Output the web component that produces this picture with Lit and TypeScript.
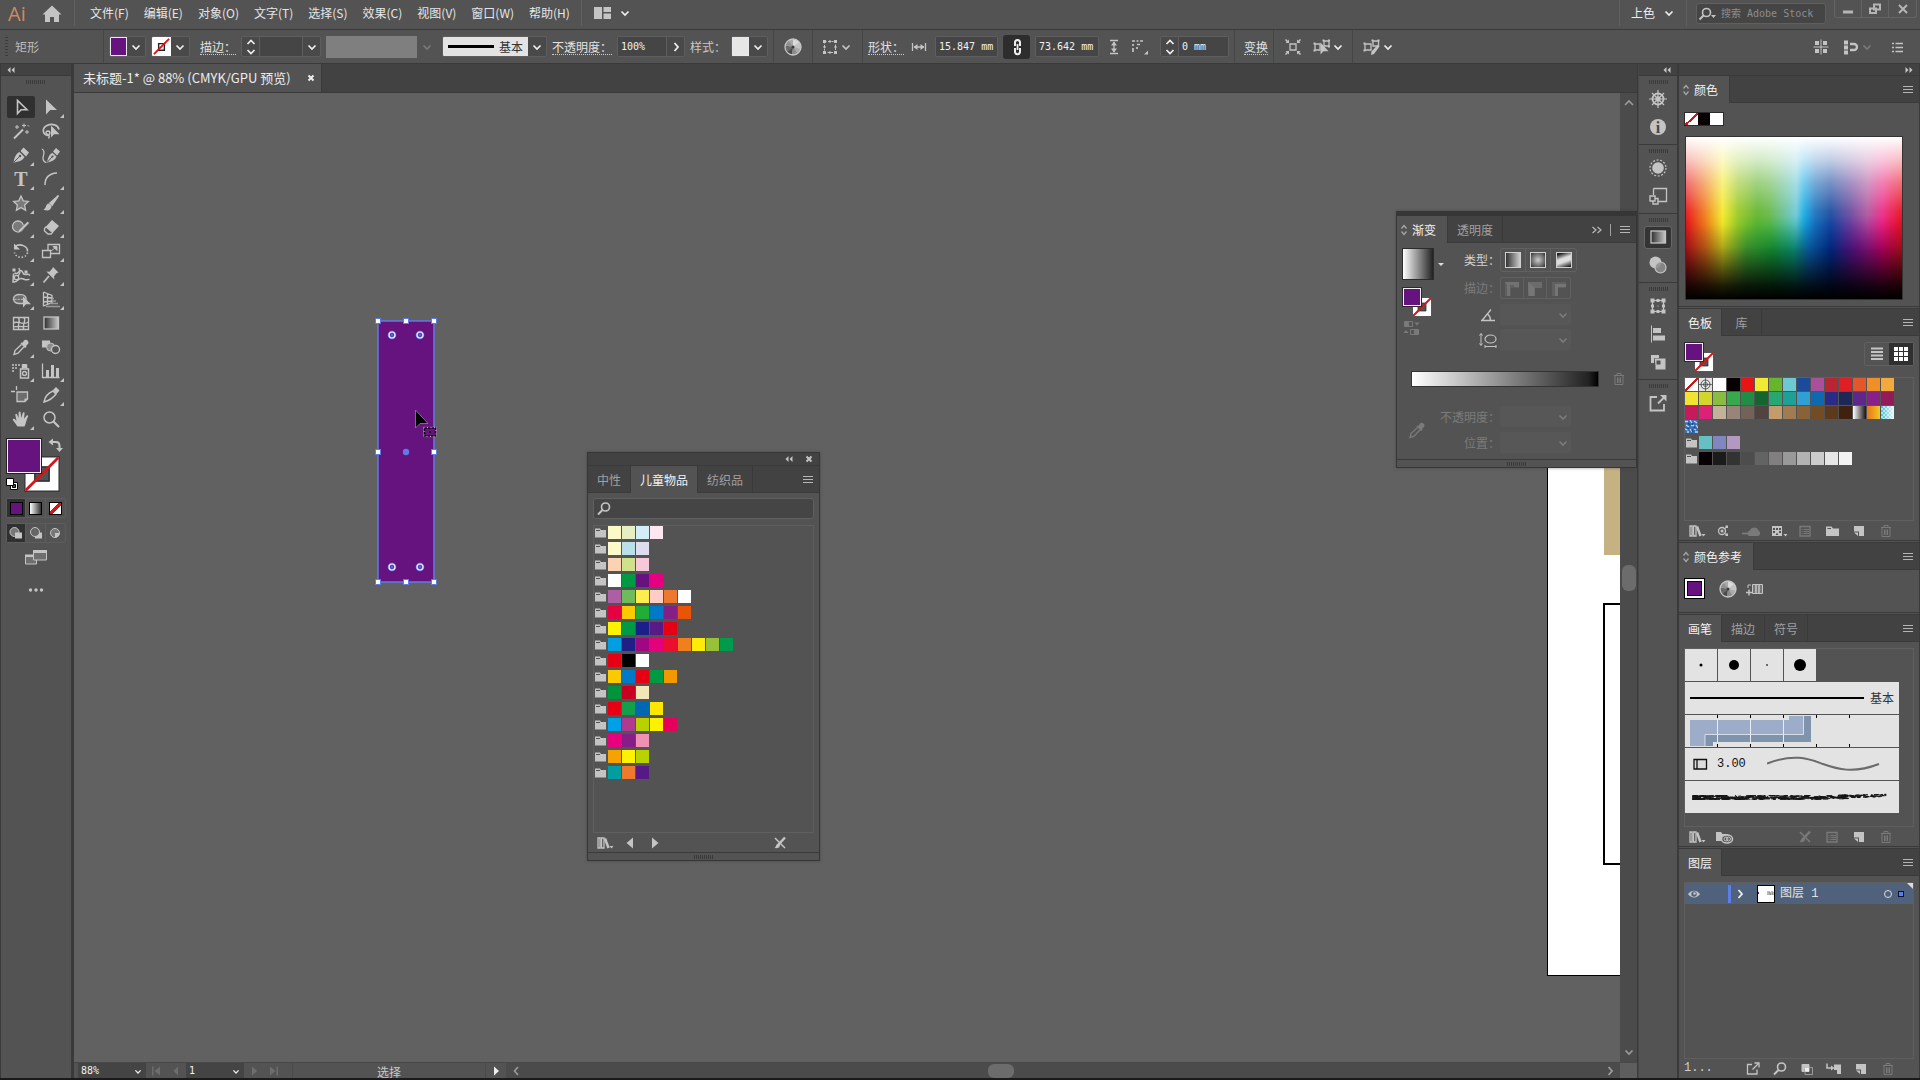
import { LitElement, html, svg, css, nothing } from "lit";
import { customElement, state } from "lit/decorators.js";
import { classMap } from "lit/directives/class-map.js";

const PURPLE = "#67137f";

/* Icons are drawn on a 20 x 20 grid unless a size is passed. */
const glyphs: Record<string, any> = {
  select: svg`<path d="M6.500 3.500v13l3.600-3.800h5.900z" fill="none" stroke="currentColor" stroke-width="1.600"/>`,
  direct: svg`<path d="M5 2.500v15l4.200-4.500H16z" fill="currentColor"/>`,
  wand: svg`<path d="M3 17.500 12 8.500" stroke="currentColor" stroke-width="2"/><path d="M6 4v4M4 6h4M13 2.500v4M11 4.500h4M16 9v4M14 11h4" stroke="currentColor"/><path d="m16.500 4 1.500 1.500" stroke="currentColor"/>`,
  lasso: svg`<path d="M7 14.500c-5-.5-7-7-1-10 5-2.500 11-.5 12 4" fill="none" stroke="currentColor" stroke-width="1.600"/><path d="M7 14.500c2-1 3-4 0-4.500-2.500 0-3 3 0 3.500 1 .5 2 2 .5 4" fill="none" stroke="currentColor" stroke-width="1.400"/><path d="M10 4.500v12l3-3.300h5.500z" fill="currentColor"/>`,
  pen: svg`<path d="M2.500 17.500c1-5 2-8.500 6-10.500l5 5c-2 4-6 4.500-11 5.500z" fill="currentColor"/><path d="m9.500 6 3-3.500 5.500 5-3 4z" fill="currentColor"/><path d="m3 17 5.500-5.500" stroke="#535353"/><circle cx="9" cy="11" r="1.200" fill="#535353"/>`,
  curvature: svg`<path d="M6 17.500c1-5 2-8 5.500-9.800l4 4c-2 4-5 4.800-9.500 5.800z" fill="currentColor"/><path d="m12 6.500 3-3.500 4 3.500-3 4z" fill="currentColor"/><path d="m6.500 17 4.500-5" stroke="#535353"/><circle cx="11.500" cy="11.500" r="1.100" fill="#535353"/><path d="M1 4c4 2 1 7 1 9s1 4 3.500 4.500" fill="none" stroke="currentColor" stroke-width="1.300"/>`,
  type: svg`<text x="10" y="16.500" text-anchor="middle" font-family="Liberation Serif, serif" font-weight="700" font-size="20" fill="currentColor">T</text>`,
  arc: svg`<path d="M4 16C4 9 8 4.500 16 4" fill="none" stroke="currentColor" stroke-width="1.500"/>`,
  star: svg`<path d="m10 3 2.200 4.800 5.200.6-3.800 3.600 1 5.200L10 14.600l-4.600 2.600 1-5.200-3.800-3.600 5.200-.6z" fill="#7a7a7a" stroke="currentColor" stroke-width="1.300"/>`,
  brush: svg`<path d="M17.500 2.500 9 10l2 2.200z" fill="currentColor" stroke="currentColor" stroke-width="1.500"/><path d="M8 10.500c-4 .5-2 4.500-5.500 6 3.500 1.800 8 1 8-3.500z" fill="currentColor"/>`,
  shaper: svg`<circle cx="7" cy="9.500" r="5.500" fill="#7a7a7a" stroke="currentColor" stroke-width="1.300"/><path d="m18.500 6-9 9-3 1.500 1-3.500 9-8.500z" fill="currentColor" stroke="#535353" stroke-width=".5"/>`,
  eraser: svg`<path d="m11 3 7 6-6 6.500-7-6z" fill="currentColor"/><path d="m5 9.800 6.500 5.700-1.500 1.500H7L3.500 14v-2.500z" fill="none" stroke="currentColor" stroke-width="1.300"/>`,
  rotate: svg`<path d="M4 5.500c5-3.500 13-.5 12.500 5" fill="none" stroke="currentColor" stroke-width="1.600"/><path d="M3 2.500v6h6z" fill="currentColor"/><path d="M16.500 11.500c-1 6-11 7-13 0" fill="none" stroke="currentColor" stroke-width="1.600" stroke-dasharray="1.500 1.800"/>`,
  scale: svg`<path d="M7 3.500h11.500v9H7z" fill="none" stroke="currentColor" stroke-width="1.300"/><path d="M1.500 9.500h8v7h-8z" fill="#535353" stroke="currentColor" stroke-width="1.300"/><path d="m10 10 4-3M12 5.500h4v4z" fill="currentColor" stroke="currentColor"/>`,
  width: svg`<path d="M2.500 8.500 2 17c5 .5 5-4 8.500-3.500 3 .5 5 2.500 8 .5M3.500 8c4 2.500 4-3 6.500-2.500S11 9.500 14 9.500s3-1 5 1" fill="none" stroke="currentColor" stroke-width="1.500"/><path d="m8 3 1 4.500-2 4" fill="none" stroke="currentColor" stroke-width="1.300"/><path d="M1.500 3.500h3v3h-3z" fill="currentColor"/><circle cx="5.500" cy="12.500" r="2.200" fill="#535353" stroke="currentColor" stroke-width="1.300"/><path d="M13.500 5.500h3v3h-3z" fill="currentColor"/>`,
  pin: svg`<path d="m12 2 5.500 5.500-2 .8-2.500 3 .3 3.200-8-8 3.200.3 2.700-3z" fill="currentColor"/><path d="m8 11-5.500 6.500" stroke="currentColor" stroke-width="1.800"/>`,
  shapebuild: svg`<path d="M12 14.500H7.500a5.500 4.500 0 1 1 2-8.800 4.800 4.800 0 0 1 5.500 6.300" fill="#6d6d6d" stroke="currentColor" stroke-width="1.300"/><path d="M3.500 10.300h9" stroke="currentColor" stroke-dasharray="2 1.200"/><path d="M12 7.500v11l3-3.300h5z" fill="currentColor"/>`,
  perspective: svg`<path d="M2.500 3v14.500M2.500 3l8.500 3.500v7L2.500 17M2.500 8 11 9M2.500 13l8.500-1M6.500 4.500V15" fill="none" stroke="currentColor" stroke-width="1.300"/><path d="M11 9.500h2M11 12h4M9 14.500h8M5 17.500h14" stroke="#9a9a9a" stroke-width="1.500"/>`,
  mesh: svg`<path d="M2.500 4.500h15v12h-15z M2.500 10c4-3 9 3 15-1M7 4.500c4 4-2 7 1 12M13 4.500c3 4-3 8 0 12M2.500 14c5-2 9 1 15-1" fill="none" stroke="currentColor" stroke-width="1.300"/>`,
  gradient: svg`<defs><linearGradient id="g-tool"><stop offset="0" stop-color="#2d2d2d"/><stop offset="1" stop-color="#c9c9c9"/></linearGradient></defs><rect x="3" y="4" width="14.500" height="12" fill="url(#g-tool)" stroke="currentColor" stroke-width="1.300"/>`,
  dropper: svg`<path d="M13 3.500c2-2.500 6 1 4 3.500l-2 2 .5 1-1.500 1L9.500 6.500l1-1 1 .3z" fill="currentColor"/><path d="m10.500 7.500-6.500 6L3 17.500l4-1.300 6-6.400" fill="none" stroke="currentColor" stroke-width="1.400"/>`,
  blend: svg`<path d="M1 3.500h8v7H1z" fill="currentColor"/><circle cx="9.500" cy="10" r="4" fill="#8c8c8c" stroke="#c4c4c4"/><circle cx="14.500" cy="12.500" r="4" fill="#535353" stroke="currentColor" stroke-width="1.400"/>`,
  spray: svg`<path d="M9.500 8h8v9h-8z M11.500 8V4h4v4" fill="none" stroke="currentColor" stroke-width="1.500"/><path d="M11.500 3h4v4h-4z" fill="currentColor"/><circle cx="13.500" cy="12.500" r="2" fill="none" stroke="currentColor" stroke-width="1.300"/><path d="M1 4h2M4 4h2M7 4h2M1 7h2M4 7h2M1 10h2" stroke="currentColor" stroke-width="1.600"/>`,
  chart: svg`<path d="M1.500 2.500v14h17" fill="none" stroke="currentColor" stroke-width="1.300"/><path d="M5 9h3v7H5zM10 4h3v12h-3zM15 7h3v9h-3z" fill="currentColor"/>`,
  artboard: svg`<path d="M5.500 1v4M0 6.500h4" stroke="currentColor" stroke-width="1.300"/><path d="M6 7h10.500v7l-2.500 2.500H6z" fill="#6d6d6d" stroke="currentColor" stroke-width="1.300"/><path d="M16.500 13.500 13.500 17v-3.500z" fill="currentColor"/>`,
  slice: svg`<path d="M3 17c1-5 4-9 9-11l3 3c-3 4-6 6.500-12 8z" fill="none" stroke="currentColor" stroke-width="1.500"/><path d="m12 5 3-3 3.500 3.500-3 3.500z" fill="currentColor"/>`,
  hand: svg`<path d="M6.500 17.500c-1.500-2-3-4.500-4.500-6.300-.8-1.200.8-2 1.800-1.100L5.500 12 4.300 5.800c0-1.200 1.400-1.400 1.800-.3L7.500 9 7.700 3.300c.1-1.100 1.700-1.100 1.900 0L10.200 9l1.600-5.200c.4-1 1.900-.7 1.800.4L13 9.800 15.600 6.500c.8-.8 2 0 1.500 1-1.500 3-2 6.500-3.600 10z" fill="currentColor"/>`,
  zoom: svg`<circle cx="8.500" cy="8.500" r="5.500" fill="none" stroke="currentColor" stroke-width="1.500"/><path d="m12.500 12.500 5.500 5.500" stroke="currentColor" stroke-width="2.200"/>`,
  screens: svg`<path d="M1.500 8h11v8h-11z" fill="#6f6f6f" stroke="currentColor"/><path d="M1 6.500h12V9H1z" fill="currentColor"/><path d="M9.500 3h13v9h-13z" fill="#6f6f6f" stroke="currentColor"/><path d="M9 2h14v3H9z" fill="currentColor"/>`,
  home: svg`<path d="M10 1.500 0.500 10.500H3V18h5v-5h4v5h5v-7.500h2.500z" fill="currentColor"/>`,
  layout: svg`<path d="M1 4h8v12H1zM10.500 4H18v5h-7.500zM10.500 10.500H18V16h-7.500z" fill="currentColor"/>`,
  chev: svg`<path d="m6.500 8.500 3.500 3.500 3.500-3.500" fill="none" stroke="currentColor" stroke-width="1.700"/>`,
  chevUp: svg`<path d="m6 12 4-4 4 4" fill="none" stroke="currentColor" stroke-width="1.600"/>`,
  chevR: svg`<path d="m8.500 6 3.500 4-3.500 4" fill="none" stroke="currentColor" stroke-width="1.800"/>`,
  chevL: svg`<path d="m12 6-3.500 4 3.500 4" fill="none" stroke="currentColor" stroke-width="1.600"/>`,
  spin: svg`<path d="m6.500 7 3.500-3.500L13.500 7M6.500 13l3.500 3.500 3.500-3.500" fill="none" stroke="currentColor" stroke-width="1.700"/>`,
  fold: svg`<path d="m7.500 8.500 2.500-3 2.500 3M7.500 11.500l2.500 3 2.500-3" fill="none" stroke="currentColor" stroke-width="1.200"/>`,
  dblL: svg`<path d="m9.500 7-3 3 3 3zM13.500 7l-3 3 3 3z" fill="currentColor"/>`,
  dblR: svg`<path d="m6.500 7 3 3-3 3zM10.500 7l3 3-3 3z" fill="currentColor"/>`,
  dblRopen: svg`<path d="m5.500 7 3.500 3-3.500 3M10.500 7l3.500 3-3.500 3" fill="none" stroke="currentColor" stroke-width="1.300"/>`,
  close: svg`<path d="m7.500 7.500 5 5M12.500 7.500l-5 5" stroke="currentColor" stroke-width="2"/>`,
  closeBig: svg`<path d="m6 6 8 8M14 6l-8 8" stroke="currentColor" stroke-width="2"/>`,
  min: svg`<path d="M5 11.500h10v3H5z" fill="currentColor"/>`,
  restore: svg`<path d="M9 5.500h6v5H9zM5 9.500h6v4.500H5z" fill="#535353" stroke="currentColor" stroke-width="2"/>`,
  burger: svg`<path d="M5 6.500h10M5 9.500h10M5 12.500h10" stroke="currentColor"/>`,
  search: svg`<circle cx="11.500" cy="8" r="4" fill="none" stroke="currentColor" stroke-width="1.600"/><path d="M8.500 11 4 15.500" stroke="currentColor" stroke-width="2"/>`,
  searchMenu: svg`<circle cx="9.500" cy="8.500" r="4" fill="none" stroke="currentColor" stroke-width="1.600"/><path d="M6.500 11.500 2.500 15.500" stroke="currentColor" stroke-width="2"/><path d="M14 11h5l-2.500 3z" fill="currentColor"/>`,
  wheel: svg`<circle cx="10" cy="10" r="8" fill="#a9a9a9"/><path d="M10 10 10 2A8 8 0 0 1 16.500 5.200z" fill="#dadada"/><path d="M10 10 16.500 5.200A8 8 0 0 1 17.700 12z" fill="#c3c3c3"/><path d="M10 10 4 15.300A8 8 0 0 1 2.200 8.500z" fill="#6a6a6a"/><path d="M10 10 9 18A8 8 0 0 1 4 15.300z" fill="#4a4a4a"/><path d="M10 10 14.500 16.600A8 8 0 0 1 9 18z" fill="#8b8b8b"/><path d="M10 10 2.500 8A8 8 0 0 1 5.500 3.500z" fill="#8f8f8f"/><circle cx="10" cy="10" r="8" fill="none" stroke="#c6c6c6" stroke-width="1.300"/><circle cx="10" cy="10" r="1.500" fill="#3b3b3b"/>`,
  transform: svg`<path d="M4.500 4.500h11v11h-11z" fill="none" stroke="currentColor" stroke-dasharray="2 1.500"/><path d="M3 3h3v3H3zM14 3h3v3h-3zM3 14h3v3H3zM14 14h3v3h-3zM9 3.500h2v2H9zM9 14.500h2v2H9zM3.500 9h2v2h-2zM14.500 9h2v2h-2z" fill="currentColor"/>`,
  hsize: svg`<path d="M3.500 6v8M16.500 6v8M5 10h10" stroke="currentColor" stroke-width="1.300"/><path d="m8.500 7-4 3 4 3zM11.500 7l4 3-4 3z" fill="currentColor"/>`,
  vsize: svg`<path d="M6 3.500h8M6 16.500h8M10 5v10" stroke="currentColor" stroke-width="1.300"/><path d="m7 8.500 3-4 3 4zM7 11.500l3 4 3-4z" fill="currentColor"/>`,
  link: svg`<path d="M8 9V5.500C8 2 13 2 13 5.500V9M8 11v3.500C8 18 13 18 13 14.500V11" fill="none" stroke="currentColor" stroke-width="2"/><path d="M10.500 7v6" stroke="currentColor" stroke-width="1.800"/>`,
  corner: svg`<path d="M3 4h3M7.500 4h2M11 4h3M4 7v2M4 11v4M8 7.500h3M8 10v2" stroke="currentColor" stroke-width="1.700"/><path d="M19 13.500v4h-4z" fill="currentColor"/>`,
  isolate: svg`<path d="M7 7h6v6H7z" fill="none" stroke="currentColor" stroke-width="1.300"/><path d="m2.500 2.500 3 3M17.500 2.500l-3 3M2.500 17.500l3-3M17.500 17.500l-3-3" stroke="currentColor" stroke-width="1.500"/><path d="M6 2.500V6H2.500zM14 2.500V6h3.500zM6 17.500V14H2.500zM14 17.500V14h3.500z" fill="currentColor"/>`,
  similar: svg`<path d="M3 7h5v6H3zM12 4h5v5h-5z" fill="none" stroke="currentColor" stroke-width="1.300"/><path d="M1.500 5.500h2v2h-2zM1.500 12.500h2v2h-2zM10.500 2.500h2v2h-2zM16 2.500h2v2h-2zM16 8.500h2v2h-2z" fill="currentColor"/><path d="M8.500 5.500v12l3-3.300h5z" fill="currentColor"/>`,
  editSimilar: svg`<path d="M3 7h6v6H3zM11 4h5.500v5H11z" fill="none" stroke="currentColor" stroke-width="1.300"/><path d="M1.500 5.500h2v2h-2zM1.500 12.500h2v2h-2zM9.500 2.500h2v2h-2zM15.500 2.500h2v2h-2z" fill="currentColor"/><path d="m15.500 8 2 1.500-5.500 7.500-3 1 .5-3.500z" fill="currentColor"/>`,
  alignGrid: svg`<path d="M4 4h4v4H4zM12 4h4v4h-4zM4 12h4v4H4zM12 12h4v4h-4z" fill="currentColor"/><path d="M10 2.500v15M2.500 10h15" stroke="currentColor"/>`,
  snap: svg`<path d="M3 3.500h4v4H3zM3 8.500h4v4H3zM3 13.500h4v4H3z" fill="currentColor"/><path d="M9 7h4a3 3 0 0 1 0 6H9" fill="none" stroke="currentColor" stroke-width="2.300"/>`,
  list: svg`<path d="M5 6.500h2M5 10.500h2M5 14.500h2M8.500 6.500H16M8.500 10.500H16M8.500 14.500H16" stroke="currentColor" stroke-width="1.500"/>`,
  helm: svg`<circle cx="10" cy="10" r="5.500" fill="none" stroke="currentColor" stroke-width="1.800"/><circle cx="10" cy="10" r="2" fill="none" stroke="currentColor" stroke-width="1.300"/><path d="M10 1v18M1 10h18M4 4l12 12M16 4 4 16" stroke="currentColor" stroke-width="1.200"/>`,
  info: svg`<circle cx="10" cy="10" r="8" fill="currentColor"/><text x="10" y="15.500" text-anchor="middle" font-family="Liberation Serif, serif" font-weight="700" font-size="16" fill="#484848">i</text>`,
  appearance: svg`<circle cx="10" cy="10" r="5.800" fill="currentColor"/><circle cx="10" cy="10" r="8" fill="none" stroke="currentColor" stroke-width="1.200" stroke-dasharray="2 1.600"/>`,
  styles: svg`<path d="M5.500 2.500h13v13h-9" fill="none" stroke="currentColor" stroke-width="1.300"/><path d="M5.500 2.500V9" stroke="currentColor" stroke-width="1.300"/><path d="M2 10h5v5H2zM7 12.500h3V18H5v-3" fill="none" stroke="currentColor" stroke-width="1.400"/>`,
  transparency: svg`<circle cx="7.500" cy="7.500" r="6" fill="currentColor"/><circle cx="12.500" cy="12.500" r="5.500" fill="#8e8e8e" fill-opacity=".85" stroke="currentColor" stroke-width="1.200"/>`,
  align: svg`<path d="M3.500 1.500v17" stroke="currentColor"/><path d="M5 4h8v5H5zM5 11.500h12v5H5z" fill="currentColor"/>`,
  pathfinder: svg`<path d="M3 3h8v3H6v5H3zM6.500 6.500h11v11h-10v-6z" fill="currentColor"/><path d="M8 8h5v5H8z" fill="#535353" stroke="currentColor"/>`,
  exportIcon: svg`<path d="M9 4H2.500v13.500H16V11" fill="none" stroke="currentColor" stroke-width="1.800"/><path d="M12 2h6.500v6.500z" fill="currentColor"/><path d="m10 10.500 6-6" stroke="currentColor" stroke-width="1.800"/>`,
  collect: svg`<path d="M9 5.500H4.500v9.500H14v-4.500" fill="none" stroke="currentColor" stroke-width="1.300"/><path d="M11.500 4H16v4.500" fill="none" stroke="currentColor" stroke-width="1.300"/><path d="m9.500 10.500 6-6" stroke="currentColor" stroke-width="1.300"/>`,
  tframe: svg`<path d="M4.500 4.500h11v11h-11z" fill="none" stroke="currentColor" stroke-width="1.200"/><path d="M2.500 2.500h4v4h-4zM13.500 2.500h4v4h-4zM2.500 13.500h4v4h-4zM13.500 13.500h4v4h-4zM8.500 3h3v3h-3zM8.500 14h3v3h-3zM3 8.500h3v3H3zM14 8.500h3v3h-3zM9.500 9.500h1v1h-1z" fill="currentColor"/>`,
  books: svg`<path d="M3 5h2v10H3zM6.500 5H9v10H6.500z" fill="none" stroke="currentColor" stroke-width="1.300"/><path d="m10 5.500 3.500 9.500" stroke="currentColor" stroke-width="2.500"/><path d="M14.500 13h4l-2 2.500z" fill="currentColor"/>`,
  kinds: svg`<circle cx="8" cy="10" r="3.500" fill="none" stroke="currentColor" stroke-width="1.300"/><circle cx="8" cy="10" r="1.500" fill="currentColor"/><path d="m10 8.500 3-3M10 11.500l3 3" stroke="currentColor"/><path d="M11.500 4.500h2.500v2.500h-2.500zM11.500 12.500h2.500v2.500h-2.500z" fill="currentColor"/>`,
  cloud: svg`<path d="M8 15a3 3 0 0 1 1-5.500 4.500 4.500 0 0 1 8.500 0 3 3 0 0 1-.5 5.500z" fill="currentColor"/><path d="M1 12.500h7" stroke="currentColor" stroke-width="1.800"/>`,
  swatchKinds: svg`<path d="M4 5h10v10H4z" fill="currentColor"/><path d="M5 7h2v2H5zM8 7h2v2H8zM11 7h2v2h-2zM5 10h2v2H5zM8 12.500h2V14H8zM11 10h2v2h-2z" fill="#535353"/><path d="M15.500 13h4l-2 2.500z" fill="currentColor"/>`,
  options: svg`<path d="M5 5.500h10v9.500H5z" fill="none" stroke="currentColor" stroke-width="1.300"/><path d="M6.500 8.500h1M6.500 10.500h1M6.500 12.500h1M8.500 8.500H14M8.500 10.500H14M8.500 12.500H14" stroke="currentColor"/>`,
  folder: svg`<path d="M4 5.500h5.500l1.500 2h6V15H4z" fill="currentColor"/><path d="M5.500 7.500h3.500" stroke="#535353"/>`,
  fresh: svg`<path d="M5 5h10v10h-5v-4.500H5z" fill="currentColor"/><path d="M5 11.500h4V15z" fill="currentColor"/>`,
  trash: svg`<path d="M5 6.500h10M8 6V4.500h4V6M6 7v8.500h8V7M8.500 8.500v5.500M10 8.500v5.500M11.500 8.500v5.500" fill="none" stroke="currentColor"/>`,
  ccFolder: svg`<path d="M2 5h5l1.500 2H14v7H2z" fill="currentColor"/><ellipse cx="13" cy="12" rx="5.500" ry="4" fill="#535353" stroke="currentColor" stroke-width="1.500"/><circle cx="12" cy="12" r="2" fill="none" stroke="currentColor"/><circle cx="14.500" cy="12" r="2" fill="none" stroke="currentColor"/>`,
  noBrush: svg`<path d="m5 5 10 10" stroke="currentColor" stroke-width="1.500"/><path d="m15 4.500-6.500 7" stroke="currentColor" stroke-width="2.500"/><path d="M8.500 10.500c-2.500 0-2 3-4 4.500 2.500.5 5.500 0 5.500-3z" fill="currentColor"/>`,
  clip: svg`<path d="M5 5.500h7v7H5z" fill="currentColor" stroke="currentColor"/><path d="M8 8.500h7.500v7H8z" fill="none" stroke="#9a9a9a"/><path d="M8 8.500h4v4H8z" fill="#eee"/>`,
  sublayer: svg`<path d="M3 4.500V9h5" fill="none" stroke="currentColor" stroke-width="1.500"/><path d="m7 6.500 3.500 2.500L7 11.500z" fill="currentColor"/><path d="M10 5.500h7V15h-4v-4h-3z" fill="currentColor"/>`,
  prev: svg`<path d="M13 4.500v11L6.500 10z" fill="currentColor"/>`,
  next: svg`<path d="M7 4.500v11l6.500-5.500z" fill="currentColor"/>`,
  first: svg`<path d="M14 5.500v9L8.500 10zM6 5.500h1.500v9H6z" fill="currentColor"/>`,
  last: svg`<path d="M6 5.500v9l5.500-4.500zM12.500 5.500H14v9h-1.500z" fill="currentColor"/>`,
  prevS: svg`<path d="M12 5.500v9L7.500 10z" fill="currentColor"/>`,
  nextS: svg`<path d="M8 5.500v9l5-4.500z" fill="currentColor"/>`,
  angle: svg`<path d="M3 15.500h14M4 15.500 13 4.500M9.500 9a8 8 0 0 1 3 6.500" fill="none" stroke="currentColor" stroke-width="1.300"/>`,
  aspect: svg`<ellipse cx="12.500" cy="9" rx="5.500" ry="4" fill="none" stroke="currentColor" stroke-width="1.200"/><path d="M3 4v11M1.500 5.500 3 3.500l1.500 2M1.500 13.500 3 15.500l1.500-2M7 15v3M18 15v3M7 16.500h11" fill="none" stroke="currentColor"/>`,
  reverse: svg`<path d="M2.500 4.500h8v5h-8zM8.500 12.500h8v5h-8z" fill="none" stroke="currentColor"/><path d="M3 5h4v4H3zM12 13h4v4h-4zM12.500 5.500h5l-2.500 3zM1.500 16h5L4 13z" fill="currentColor"/>`,
  addGroup: svg`<path d="M8.500 5.500h10v9h-10z" fill="#777" stroke="currentColor"/><path d="M12 5.500v9M15 5.500v9M2 13.500h6M5 10.500v6" stroke="currentColor" stroke-width="1.500"/><path d="M4 9V6h3" fill="none" stroke="currentColor"/>`,
  rows: svg`<path d="M4 4.500h12M4 8h12M4 11.500h12M4 15h12" stroke="currentColor" stroke-width="1.800"/>`,
  tiles: svg`<path d="M3 3h4v4H3zM8 3h4v4H8zM13 3h4v4h-4zM3 8h4v4H3zM8 8h4v4H8zM13 8h4v4h-4zM3 13h4v4H3zM8 13h4v4H8zM13 13h4v4h-4z" fill="currentColor"/>`,
  eye: svg`<path d="M4 10c3-4.500 9-4.500 12 0-3 4.500-9 4.500-12 0z" fill="currentColor"/><circle cx="10" cy="10" r="2.700" fill="#50627b"/><circle cx="10.500" cy="9.500" r="1.300" fill="currentColor"/>`,
  swap: svg`<path d="M6 6h4c2 0 3.500 1.500 3.500 4v3" fill="none" stroke="currentColor" stroke-width="2"/><path d="M7 2.500v7L2.500 6zM10 12h7l-3.500 4z" fill="currentColor"/>`,
  defaults: svg`<path d="M8.500 8.500h7v7h-7z" fill="#fff" stroke="#000"/><path d="M10.500 10.500h3v3h-3z" fill="#535353" stroke="#000"/><path d="M4.500 4.500h7v7h-7z" fill="#fff" stroke="#000"/>`,
  drawNormal: svg`<circle cx="8.500" cy="9" r="4.500" fill="#777" stroke="currentColor"/><path d="M9 9.500h7v6H9z" fill="currentColor"/>`,
  drawBehind: svg`<path d="M9 9.500h7v6H9z" fill="currentColor"/><circle cx="9" cy="9" r="4.500" fill="#666" stroke="currentColor"/>`,
  drawInside: svg`<circle cx="10" cy="10" r="4.500" fill="#777" stroke="currentColor"/><path d="M10 10h4.500c0 3-2 4.500-4.500 4.500z" fill="currentColor"/>`,
  more: svg`<circle cx="4.500" cy="10" r="1.700" fill="currentColor"/><circle cx="10" cy="10" r="1.700" fill="currentColor"/><circle cx="15.500" cy="10" r="1.700" fill="currentColor"/>`,
  strokeIn: svg`<path d="M3 4h14v6h-8v8H3z" fill="#5f5f5f"/><path d="M3 4h14v5h-5v-2H8v11H5V7z" fill="currentColor" opacity=".7"/>`,
  strokeAlong: svg`<path d="M3 4h14v6H9v8H3z" fill="#6b6b6b"/><path d="m3 4 7 6v8H4z" fill="currentColor" opacity=".7"/>`,
  strokeAcross: svg`<path d="M3 4h14v6H9v8H3z" fill="#606060"/><path d="M6 6h11v3H9v9H6z" fill="currentColor" opacity=".8"/>`,
};

const icon = (name: string, w = 20, h = 20, size = 1) => html`<svg
  class="icon" viewBox="0 0 ${w} ${h}" width=${Math.round(w * size)} height=${Math.round(h * size)} aria-hidden="true"
>${glyphs[name]}</svg>`;

const tools: [string, string, boolean][] = [
  ["select", "选择工具", false], ["direct", "直接选择工具", true],
  ["wand", "魔棒工具", false], ["lasso", "套索工具", false],
  ["pen", "钢笔工具", true], ["curvature", "曲率工具", false],
  ["type", "文字工具", true], ["arc", "弧形工具", true],
  ["star", "星形工具", true], ["brush", "画笔工具", true],
  ["shaper", "Shaper 工具", true], ["eraser", "橡皮擦工具", true],
  ["rotate", "旋转工具", true], ["scale", "比例缩放工具", true],
  ["width", "宽度工具", true], ["pin", "操控变形工具", true],
  ["shapebuild", "形状生成器工具", true], ["perspective", "透视网格工具", true],
  ["mesh", "网格工具", false], ["gradient", "渐变工具", false],
  ["dropper", "吸管工具", true], ["blend", "混合工具", false],
  ["spray", "符号喷枪工具", true], ["chart", "柱形图工具", true],
  ["artboard", "画板工具", false], ["slice", "切片工具", true],
  ["hand", "抓手工具", true], ["zoom", "缩放工具", false],
];

const menus = ["文件(F)", "编辑(E)", "对象(O)", "文字(T)", "选择(S)", "效果(C)", "视图(V)", "窗口(W)", "帮助(H)"];

const kidsGroups: string[][] = [
  ["#fdf8c8", "#e6eec3", "#d3edf9", "#fce6f0"],
  ["#fef9c9", "#b9dfe9", "#dfdcef"],
  ["#fbd3b3", "#cfe18b", "#f7c8da"],
  ["#ffffff", "#009a44", "#66127f", "#e5007f"],
  ["#ad5fa3", "#6dbb5a", "#fdee50", "#fbcdc6", "#ef7830", "#ffffff"],
  ["#e40041", "#fbca00", "#22ac38", "#0079c9", "#851f85", "#e95504"],
  ["#fff200", "#009a44", "#1b1f88", "#581b86", "#e60013"],
  ["#019fdf", "#1f2085", "#9f0783", "#e4007b", "#ea0f2f", "#ef801b", "#fdec0a", "#98c038", "#009a4d"],
  ["#e60013", "#000000", "#ffffff"],
  ["#fbca00", "#007ac8", "#e60013", "#009a44", "#f39900"],
  ["#00953d", "#c70022", "#f2e5b6"],
  ["#e60013", "#13a04a", "#0067b3", "#ffe600"],
  ["#00a0e9", "#b03a90", "#b8d200", "#fff200", "#e5005a"],
  ["#e9007f", "#871d86", "#ee91b2"],
  ["#f6a200", "#fff200", "#b8d200"],
  ["#009ea0", "#ef7a2c", "#561a86"],
];

const mainSwatches = [
  "none", "registration", "#ffffff", "#070102", "#e71516", "#f0ea34", "#67b42d", "#6cc8d2", "#1b4b9c", "#aa509b", "#b92532", "#df1e26", "#e3582a", "#ee8f28", "#f2a93d",
  "#f0e431", "#d2d52b", "#88bd40", "#36a94d", "#1f8d46", "#12652f", "#27a873", "#1da196", "#2f9fd4", "#0d6ab1", "#282c88", "#1d2856", "#5e278c", "#891f88", "#951a58",
  "#c61a5d", "#de2078", "#c3b299", "#998578", "#736258", "#514440", "#c49b6b", "#a17c52", "#8a6237", "#744c24", "#5e3a1d", "#3f210f",
  "linear-gradient(90deg,#fff,#1a1014)", "linear-gradient(90deg,#e5771e,#f09c1b 50%,#e2cf2a)",
  "conic-gradient(#fff8 25%,#0000 0 50%,#fff8 0 75%,#0000 0) 0 0/4px 4px,linear-gradient(90deg,#45bcd0,#e8f4f6)",
  "pattern",
];
const swatchGroups = [
  ["#66bfc3", "#8086bf", "#b398c2"],
  ["#070004", "#1b1b1c", "#333333", "#4d4d4d", "#626363", "#827f80", "#999999", "#b3b3b3", "#cccccc", "#e6e6e6", "#f3f3f3"],
];

/* Grain of the charcoal brush: short dark dabs that thin out to the right. */
const charcoal = (() => {
  let seed = 7;
  const rnd = () => (seed = (seed * 16807) % 2147483647) / 2147483647;
  let d = "";
  for (let i = 0; i < 460; i++) {
    const x = 7 + Math.pow(rnd(), 1.3) * 194;
    const thin = x > 160 ? 0.6 : 0.9;
    const y = 16.5 - Math.max(0, (x - 130) / 35) + (rnd() - 0.5) * 4.5 * thin;
    const l = (x > 160 ? 2 : 6) * rnd() + 1;
    d += `M${x.toFixed(1)} ${y.toFixed(1)}h${l.toFixed(1)}`;
  }
  return d;
})();

@customElement("app-root")
export class AppRoot extends LitElement {
  @state() private tool = "select";

  static styles = css`
    :host {
      display: flex; flex-direction: column; height: 100vh; box-sizing: border-box;
      border-bottom: 2px solid #1b191a; background: #535353; color: #dcdcdc; overflow: hidden;
      font: 12px/16px "Noto Sans CJK SC", "Noto Sans", sans-serif;
      --line: #3a3a3a; --dark: #424242; --field: #454545; --edge: #606060; --ico: #c4c4c4;
      --mono: "DejaVu Sans Mono", "Noto Sans CJK SC", monospace;
    }
    * { box-sizing: border-box; }
    button, input, select {
      font: inherit; color: inherit; background: none; border: 0; margin: 0; padding: 0;
      appearance: none; border-radius: 0; outline: 0; min-width: 0;
    }
    button { display: flex; align-items: center; justify-content: center; }
    .icon { display: block; flex: none; color: var(--ico); }
    .bright .icon { color: #eee; }
    .dim .icon, .icon.dim { color: #7a7a7a; }
    .grow { flex: 1; }
    .vsep { width: 1px; align-self: stretch; background: #454545; }
    .mono, .mono input, .mono select { font-family: var(--mono); font-size: 10px; color: #f2f2f2; }

    /* menu bar */
    .menubar { display: flex; height: 30px; flex: none; border-bottom: 1px solid var(--line); }
    .logo { width: 34px; flex: none; padding-left: 8px; font: 20px/28px "Open Sans", sans-serif; color: #cf8a62; }
    .home { width: 36px; height: 28px; }
    .menus { display: flex; gap: 15px; height: 26px; align-items: center; padding: 0 11px 0 15px; margin-left: 4px; border-left: 1px solid #606060; }
    .menus button { height: 20px; white-space: nowrap; color: #e6e6e6; }
    .layout { display: flex; height: 26px; align-items: center; gap: 2px; padding-left: 11px; border-left: 1px solid #606060; }
    .paint { display: flex; height: 26px; align-items: center; gap: 4px; padding: 0 7px 0 11px; border-left: 1px solid #606060; border-right: 1px solid #606060; color: #eee; }
    .stock { display: flex; align-items: center; width: 130px; height: 21px; margin: 3px 8px 0 9px; background: var(--field); border: 1px solid #5f5f5f; border-radius: 3px; }
    .stock input { flex: 1; padding-left: 4px; font: 10px/14px var(--mono); }
    .stock input::placeholder { color: #8d8d8d; opacity: 1; }
    .win { display: flex; height: 18px; margin-right: 3px; border: 1px solid #646464; border-top: 0; border-radius: 0 0 3px 3px; }
    .win button { width: 27px; border-right: 1px solid #646464; }
    .win button:last-child { border: 0; }
    .win .icon { color: #b5b5b5; }
    .layout button:first-child .icon { color: #c4c4c4; }

    /* control bar */
    .control {
      display: grid; flex: none; height: 34px; padding: 0 13px 0 5px; column-gap: 5px; align-items: center;
      border-bottom: 1px solid var(--line);
      grid-template-columns: 3px 85px 1px 37px 39px 41px 80px 111px 105px 60px 68px 36px 37px 1px 28px 1px 39px 1px 36px 21px 63px 27px 64px 20px 26px 69px 1px 28px 1px 28px 35px 1px 44px 1fr auto;
    }
    .grip-v { height: 20px; background: repeating-linear-gradient(#3c3c3c 0 1px, transparent 1px 3px); }
    .kind { padding-left: 2px; color: #bdbdbd; }
    .ul { justify-self: end; white-space: nowrap; line-height: 15px; border-bottom: 1px dotted #ccc; color: #e2e2e2; }
    .plain { white-space: nowrap; color: #c8c8c8; }
    .box { display: flex; height: 21px; background: #494949; border: 1px solid #5e5e5e; border-radius: 2px; overflow: hidden; }
    .box input { flex: 1; width: 0; padding: 0 3px; background: var(--field); }
    .box button { width: 18px; flex: none; overflow: hidden; }
    .box .spinner { border-right: 1px solid #5e5e5e; }
    .box .drop { border-left: 1px solid #5e5e5e; }
    .chip { flex: 1; align-self: stretch; border: 1px solid #ece6ee; background: #67137f; }
    .chip.light { background: #e6e6e6; }
    .grey { display: flex; height: 22px; }
    .grey span { flex: 1; background: #7f7f7f; }
    .basic { display: flex; align-items: center; flex: 1; gap: 5px; padding: 0 5px; background: #e3e3e3; color: #333; }
    .basic i { flex: 1; height: 3px; background: #000; }
    .pair { display: flex; align-items: center; overflow: hidden; }
    .pair .icon + .icon { margin-left: -4px; }
    .pair .icon:first-child { color: #c4c4c4; }
    .linked { height: 24px; background: #2d2d2d; border-radius: 3px; overflow: hidden; }
    .right-tools { display: flex; align-items: center; gap: 10px; }
    .right-tools .icon + .icon { color: #7a7a7a; }

    /* body */
    .main { display: flex; flex: 1; min-height: 0; }
    .strip { display: flex; align-items: center; height: 12px; flex: none; background: var(--dark); border-bottom: 1px solid var(--line); overflow: hidden; }
    .strip button { height: 12px; overflow: hidden; }
    .grip { width: 19px; height: 4px; background: repeating-linear-gradient(90deg, #3a3a3a 0 1px, transparent 1px 2px); }

    .toolbar { display: flex; flex-direction: column; width: 74px; flex: none; border-left: 1px solid var(--line); border-right: 3px solid var(--line); }
    .toolbar .grip { margin: 4px auto 0 25px; }
    .toolgrid { display: grid; flex: none; grid-template-columns: 28px 28px; column-gap: 2px; grid-auto-rows: 24px; margin: 11px 0 0 6px; }
    .toolgrid button { position: relative; border-radius: 2px; }
    .toolgrid button.on { background: #303030; height: 22px; align-self: center; }
    .toolgrid button.sub::after { content: ""; position: absolute; right: 1px; bottom: 1px; border: 2px solid; border-color: transparent #c4c4c4 #c4c4c4 transparent; }
    .proxy { position: relative; flex: none; height: 54px; margin: 7px 0 6px 5px; }
    .proxy > * { position: absolute; }
    .fill { left: 0; top: 0; width: 36px; height: 36px; background: #67137f; border: 1px solid #222; outline: 1px solid #eee; outline-offset: -2px; }
    .stroke { left: 18px; top: 18px; }
    .swap { left: 40px; top: -2px; }
    .defs { left: -4px; top: 36px; }
    .modes { display: grid; flex: none; grid-template-columns: repeat(3, 1fr); width: 60px; height: 20px; margin: 0 0 5px 5px; border: 1px solid #5d5d5d; border-radius: 2px; }
    .modes button { overflow: hidden; border-right: 1px solid #5d5d5d; }
    .modes button:last-child { border: 0; }
    .modes .on { background: #303030; }
    .modes i { width: 13px; height: 13px; border: 1px solid #000; }
    .m-fill { background: #67137f; }
    .m-grad { background: linear-gradient(90deg, #fff, #333); }
    .m-none { background: linear-gradient(135deg, #fff 40%, #d8141a 40% 60%, #fff 60%); }
    .screen { margin: 0 0 0 21px; width: 28px; }
    .more { margin: 14px 0 0 25px; width: 20px; }

    .workspace { position: relative; display: flex; flex-direction: column; flex: 1; min-width: 0; border-right: 1px solid var(--line); }
    .doctabs { display: flex; height: 29px; flex: none; background: var(--dark); border-bottom: 1px solid var(--line); }
    .doctab { display: flex; align-items: center; gap: 10px; padding: 0 0 0 9px; background: #535353; color: #ececec; border-right: 1px solid var(--line); font-size: 13px; }
    .stage { display: flex; flex: 1; min-height: 0; }
    .canvas { position: relative; flex: 1; background: #616161; overflow: hidden; }
    .vscroll { display: flex; flex-direction: column; align-items: center; justify-content: space-between; width: 17px; background: #4b4b4b; }
    .vscroll i { width: 14px; height: 26px; border-radius: 6px; background: #6c6c6c; }
    .vscroll .icon, .hscroll .icon { color: #9b9b9b; }
    .art { position: absolute; right: 0; top: 200px; width: 73px; height: 683px; background: #fff; border: 1px solid #000; border-right: 0; overflow: hidden; }
    .tan { position: absolute; right: 0; top: 0; width: 16px; height: 261px; background: #c5b182; }
    .frame { position: absolute; right: -4px; top: 309px; width: 21px; height: 262px; border: 2px solid #000; }
    .object { position: absolute; left: 299px; top: 220px; }
    .status { display: flex; align-items: stretch; height: 16px; flex: none; border-top: 1px solid #484848; }
    .status .pick { width: 68px; margin-left: 4px; }
    .status .pick.small { width: 58px; margin: 0; }
    .pick { display: grid; grid-template-columns: 1fr 18px; background: #444; }
    .pick > * { grid-row: 1; }
    .pick select { grid-column: 1 / 3; padding-left: 3px; width: 100%; }
    .pick .icon { grid-column: 2; align-self: center; pointer-events: none; color: #eee; height: 15px; }
    .status .nav { width: 20px; overflow: hidden; }
    .status .nav .icon { color: #6d6d6d; }
    .mode { width: 194px; margin-left: 8px; text-align: center; line-height: 18px; color: #c9c9c9; border-left: 1px solid #4a4a4a; border-right: 1px solid #4a4a4a; }
    .hscroll { display: flex; flex: 1; align-items: center; background: #4b4b4b; overflow: hidden; }
    .hscroll i { width: 26px; height: 14px; border-radius: 6px; background: #6c6c6c; }
    .hscroll .a { flex: 470; }
    .hscroll .b { flex: 597; }
    .endcap { width: 17px; background: #5e5e5e; }

    /* panels */
    .tabs { display: flex; height: 27px; flex: none; background: var(--dark); box-shadow: inset 0 -1px var(--line); }
    .tabs button { padding: 0 9px; min-width: 40px; color: #a0a0a0; border-right: 1px solid var(--line); white-space: nowrap; overflow: hidden; }
    .tabs button.on { color: #f2f2f2; background: #535353; }
    .tabs button.lead { padding: 0 11px 0 0; }
    .tabs .lead .icon { margin: 0 -2px 0 -3px; color: #a9a9a9; }
    .tabs .icon { color: #b5b5b5; }
    .tabs .end { min-width: 22px; padding: 0; border: 0; }
    .tabs .bar { width: 1px; height: 12px; align-self: center; background: #a0a0a0; margin: 0 3px 0 2px; }
    .float { position: absolute; display: flex; flex-direction: column; background: #535353; border: 1px solid #363636; box-shadow: 0 0 3px #3a3a3a88; }
    .foot { display: flex; align-items: center; justify-content: center; height: 8px; flex: none; border-top: 1px solid var(--line); }
    .kids { left: 513px; top: 388px; width: 233px; height: 409px; }
    .kids .strip { height: 13px; justify-content: flex-end; }
    .find { display: flex; align-items: center; height: 21px; margin: 5px 5px 6px; background: var(--field); border: 1px solid var(--edge); border-radius: 3px; overflow: hidden; }
    .find input { flex: 1; }
    .kids .list { flex: 1; }
    .list { margin: 0 5px; border: 1px solid #5f5f5f; }
    .group { display: grid; grid-template-columns: 13px; grid-auto-columns: 13px; grid-auto-flow: column; column-gap: 1px; height: 13px; margin-bottom: 3px; }
    .group .icon { width: 13px; height: 13px; }
    .sw { width: 13px; height: 13px; }
    .tools { display: flex; height: 19px; flex: none; padding-left: 4px; }
    .tools button, .tools span { width: 27px; flex: none; }
    .tools .grow { flex: 1; }
    .kids .tools button { width: 25px; }

    .gpanel { right: 0; top: 147px; width: 241px; }
    .gpanel .topline { height: 4px; background: #363636; }
    .gbody { display: flex; padding: 5px 0 0 5px; }
    .gleft { width: 54px; }
    .gcur { display: flex; align-items: center; height: 32px; margin-bottom: 7px; }
    .gcur i { width: 32px; height: 32px; border: 1px solid #2c2c2c; background: linear-gradient(90deg, #fff, #222); }
    .gcur b { margin-left: 4px; border: 3px solid transparent; border-top-color: #ddd; border-bottom: 0; }
    .gform { display: grid; grid-template-columns: 44px 75px; grid-template-rows: 24px 24px 21px 21px; row-gap: 4px; align-items: center; }
    .gform > .lab { justify-self: end; white-space: nowrap; color: #d2d2d2; }
    .gform > .off { color: #7b7b7b; }
    .gform > .ic { padding-right: 2px; }
    .seg { display: flex; justify-self: start; height: 24px; border: 1px solid #606060; border-radius: 2px; }
    .seg button { width: 25px; border-right: 1px solid #606060; overflow: hidden; }
    .seg button:last-child { border: 0; }
    .seg.sm { height: 22px; }
    .seg.sm button { width: 23px; }
    .seg i { width: 16px; height: 16px; border: 1px solid #cfcfcf; }
    .t1 { background: linear-gradient(90deg, #333, #ccc); }
    .t2 { background: radial-gradient(#ccc, #333); }
    .t3 { background: linear-gradient(160deg, #222 10%, #ddd 40% 60%, #222 95%); }
    .pick.off { width: 71px; height: 21px; background: #575757; border-radius: 2px; }
    .pick.off .icon { color: #7b7b7b; height: 20px; }
    .ramp { display: flex; align-items: center; justify-content: space-between; margin: 20px 7px 19px 14px; height: 17px; }
    .ramp i { width: 188px; height: 16px; border: 1px solid #333; background: linear-gradient(90deg, #fff, #222 95%, #000); }
    .gpanel .gform.low { grid-template-columns: 60px 75px; grid-template-rows: 21px 21px; row-gap: 5px; }
    .gbody.low { padding: 0 0 6px 10px; align-items: center; }
    .gbody.low .gleft { width: 33px; }

    .dock { display: flex; flex-direction: column; width: 41px; flex: none; border-left: 1px solid #484848; border-right: 2px solid var(--line); }
    .dock .strip, .side .strip { justify-content: flex-end; }
    .dockgroup { display: grid; grid-auto-rows: 26px; grid-template-rows: 4px; row-gap: 2px; justify-items: center; padding: 4px 0 4px; border-bottom: 1px solid var(--line); }
    .dockgroup button { width: 28px; height: 23px; align-self: center; border-radius: 3px; }
    .dockgroup button.on { background: #343434; border: 1px solid #666; }
    .dockgroup.last { border: 0; }

    .side { display: flex; flex-direction: column; width: 241px; flex: none; border-right: 1px solid var(--line); }
    .panel { display: flex; flex-direction: column; flex: none; border-bottom: 3px double var(--line); }
    .panel.fill-rest { flex: 1; border: 0; min-height: 0; }
    .trio { display: flex; width: 40px; height: 14px; margin: 9px 0 10px 5px; border: 1px solid #2c2c2c; }
    .trio button { flex: 1; }
    .none-sw { background: linear-gradient(135deg, #fff 44%, #c8181c 44% 56%, #fff 56%); }
    .black-sw { background: #080003; }
    .white-sw { background: #fff; }
    .spectrum {
      position: relative; margin: 0 16px 6px 6px; height: 164px; border: 1px solid #333;
      background: linear-gradient(90deg, #c8141c, #d86a18 9%, #d8d020 17%, #45b235 28%, #16a83a 40%, #0ca58a 50%, #0a6cc0 57%, #00309c 67%, #5a1596 76%, #98108c 84%, #d00070 91%, #c8101c);
    }
    .spectrum::before, .spectrum::after { content: ""; position: absolute; inset: 0; }
    .spectrum::before {
      background: linear-gradient(90deg, #e8141c, #f07f1c 9%, #f4ea2a 17%, #9cc926 24%, #62b52f 33%, #66b845 38%, #6bc1a0 46%, #6cc9d8 51%, #16a8e4 55%, #1d70bc 60%, #1d4a9e 67%, #6a4a9f 76%, #b0569c 84%, #ec2a86 91%, #e8101c);
      -webkit-mask-image: linear-gradient(#000 48%, transparent 70%); mask-image: linear-gradient(#000 48%, transparent 70%);
    }
    .spectrum::after { background: linear-gradient(#fff, #fffb 14%, #fff6 28%, #fff1 46%, #0000 54%, #0003 68%, #0009 82%, #000d 92%, #000); }
    .swhead { display: flex; justify-content: space-between; padding: 6px 5px 5px; height: 41px; }
    .duo { position: relative; width: 30px; height: 30px; }
    .duo b { position: absolute; left: 0; top: 0; width: 20px; height: 20px; background: #67137f; border: 1px solid #2a2a2a; outline: 1px solid #eee; outline-offset: -2px; }
    .duo svg { position: absolute; left: 10px; top: 10px; }
    .views { display: flex; height: 24px; border: 1px solid #606060; border-radius: 2px; }
    .views button { width: 24px; overflow: hidden; }
    .views .on { background: #303030; }
    .views .on .icon { color: #fff; }
    .swlist { height: 144px; }
    .swgrid { display: grid; grid-template-columns: repeat(15, 13px); grid-auto-rows: 13px; gap: 1px; margin-bottom: 3px; }
    .ref { display: flex; align-items: center; height: 42px; padding: 0 5px 5px; gap: 6px; }
    .ref b { width: 21px; height: 21px; margin-right: 7px; background: #67137f; border: 1px solid #000; box-shadow: inset 0 0 0 2px #fff, inset 0 0 0 3px #000; }
    .ref button { width: 20px; }
    .brushes { height: 179px; margin-top: 6px; }
    .dots { display: flex; gap: 1px; margin-bottom: 1px; }
    .dots button, .brush { background: #e3e3e3; height: 32px; }
    .dots button { width: 32px; }
    .brush { display: flex; align-items: center; justify-content: flex-start; width: 214px; margin-bottom: 1px; color: #333; }
    .brush.line { gap: 6px; padding: 0 5px; }
    .brush.line i { flex: 1; height: 2px; background: #000; }
    .brush .num { width: 50px; font: 12px/14px "Liberation Mono", monospace; color: #111; text-align: left; }
    .layers { flex: 1; margin-top: 6px; }
    .layer { position: relative; display: grid; grid-template-columns: 18px 25px 3px 20px 6px 18px 5px 1fr 14px 6px 9px; align-items: center; height: 21px; background: #50627b; color: #e2e2e2; }
    .layer::after { content: ""; position: absolute; right: 0; top: 0; border: 3px solid; border-color: #ddd #ddd transparent transparent; }
    .layer .bar { height: 18px; background: #5b7ee8; grid-column: 3; }
    .layer button { width: 18px; overflow: hidden; }
    .layer .thumb { grid-column: 6; width: 18px; height: 18px; border: 1px solid #000; }
    .layer .name { grid-column: 8; font: 12px/16px "Liberation Mono", "Noto Sans CJK SC", monospace; }
    .layer .sel { width: 6px; height: 6px; background: #5b7ee8; border: 1px solid #0b1040; }
    .layer .target { width: 8px; height: 8px; border: 1px solid #ddd; border-radius: 50%; }
    .tools .count { width: 56px; padding-left: 1px; line-height: 19px; font-family: "Liberation Mono", monospace; color: #cfcfcf; }
  `;

  private noneStroke(size: number) {
    return html`<svg viewBox="0 0 20 20" width=${size} height=${size} aria-hidden="true">
      <path d="M.5.500h19v19H.5z" fill="#fff" stroke="#333" stroke-width=".7"/>
      <path d="M6 6h8v8H6z" fill="#535353" stroke="#222" stroke-width=".7"/>
      <path d="M1 19 19 1" stroke="#d4151b" stroke-width=${size > 24 ? 1.5 : 2}/>
    </svg>`;
  }

  private swatch(c: string) {
    if (c === "none") return html`<button class="sw none-sw" aria-label="无"></button>`;
    if (c === "registration") return html`<button class="sw white-sw" aria-label="套版色"><svg viewBox="0 0 13 13" width="13" height="13">
      <path d="M0 0h13v13H0z" fill="#e4e4e4"/><circle cx="6.500" cy="6.500" r="4.500" fill="none" stroke="#444" stroke-width=".9"/><circle cx="6.500" cy="6.500" r="2" fill="none" stroke="#444" stroke-width=".8"/><path d="M6.500 0v13M0 6.500h13" stroke="#444" stroke-width=".7"/></svg></button>`;
    if (c === "pattern") return html`<button class="sw" aria-label="图案"><svg viewBox="0 0 13 13" width="13" height="13">
      <path d="M0 0h13v13H0z" fill="#3a6fb4"/><path d="M0 1.500h3M5 0l2 3M9 1l3 2M1 5l3 2M6 5.500h3M11 5l2 3M0 9l3 1M5 9l2 3M9 9l2 1M10 12h3M2 12h2" stroke="#b4d6f4" stroke-width="1.300"/><path d="M3 3l2 2M8 3l-1 2M4 8l-2 1M9 7l1 1M7 10l1 2" stroke="#1c4484" stroke-width="1.300"/></svg></button>`;
    return html`<button class="sw" aria-label="色板" style="background:${c}"></button>`;
  }

  private group(colors: string[]) {
    return html`<div class="group">
      <svg class="icon" viewBox="0 0 13 13"><path d="M1 2.500h5l1 1.500h5v7.500H1z" fill="currentColor"/><path d="M2 4.500h4" stroke="#535353"/></svg>
      ${colors.map((c) => this.swatch(c))}
    </div>`;
  }

  private btn(name: string, label: string, cls = "") {
    return html`<button class=${cls} aria-label=${label}>${icon(name)}</button>`;
  }

  private menubar() {
    return html`<header class="menubar">
      <span class="logo">Ai</span>
      ${this.btn("home", "主页", "home")}
      <nav class="menus">${menus.map((m) => html`<button>${m}</button>`)}</nav>
      <div class="layout bright">${this.btn("layout", "排列文档")}${this.btn("chev", "展开")}</div>
      <span class="grow"></span>
      <div class="paint bright"><button>上色</button>${this.btn("chev", "切换工作区")}</div>
      <div class="stock">${icon("searchMenu")}<input aria-label="搜索 Adobe Stock" placeholder="搜索 Adobe Stock" /></div>
      <div class="win">${this.btn("min", "最小化")}${this.btn("restore", "还原")}${this.btn("closeBig", "关闭")}</div>
    </header>`;
  }

  private control() {
    const sep = html`<span class="vsep"></span>`;
    return html`<div class="control">
      <span class="grip-v"></span><span class="kind">矩形</span>${sep}
      <div class="box bright"><i class="chip"></i>${this.btn("chev", "填色")}</div>
      <div class="box bright"><svg viewBox="0 0 20 20" width="19" height="19"><path d="M0 0h20v20H0z" fill="#fff"/><path d="M7 7h6v7H7z" fill="none" stroke="#222" stroke-width="1.500"/><path d="M2 18 18 2" stroke="#d8141a" stroke-width="2"/></svg>${this.btn("chev", "描边颜色")}</div>
      <label class="ul" for="sw">描边：</label>
      <div class="box bright mono">${this.btn("spin", "增减描边", "spinner")}<input id="sw" />${this.btn("chev", "描边粗细", "drop")}</div>
      <div class="grey dim"><span></span>${this.btn("chev", "变量宽度")}</div>
      <div class="box bright"><span class="basic"><i></i>基本</span>${this.btn("chev", "画笔定义")}</div>
      <label class="ul" for="op">不透明度：</label>
      <div class="box bright mono"><input id="op" value="100%" />${this.btn("chevR", "不透明度", "drop")}</div>
      <span class="plain">样式：</span>
      <div class="box bright"><i class="chip light"></i>${this.btn("chev", "图形样式")}</div>
      ${sep}${this.btn("wheel", "重新着色图稿")}${sep}
      <button class="pair" aria-label="对齐选项">${icon("transform")}${icon("chev")}</button>${sep}
      <label class="ul" for="wd">形状：</label>
      ${icon("hsize")}
      <div class="box mono"><input id="wd" value="15.847 mm" /></div>
      ${this.btn("link", "约束宽高比例", "linked bright")}
      <div class="box mono"><input aria-label="高度" value="73.642 mm" /></div>
      ${icon("vsize")}${icon("corner")}
      <div class="box bright mono">${this.btn("spin", "增减圆角", "spinner")}<input aria-label="圆角半径" value="0 mm" /></div>
      ${sep}<button class="ul">变换</button>${sep}
      ${this.btn("isolate", "隔离选中的对象")}
      <button class="pair bright" aria-label="选择类似的对象">${icon("similar")}${icon("chev")}</button>${sep}
      <button class="pair bright" aria-label="编辑类似的对象">${icon("editSimilar")}${icon("chev")}</button>
      <span></span>
      <div class="right-tools">${this.btn("alignGrid", "对齐像素")}<button class="pair" aria-label="对齐">${icon("snap")}${icon("chev")}</button>${this.btn("list", "控制菜单")}</div>
    </div>`;
  }

  private toolbar() {
    return html`<aside class="toolbar">
      <div class="strip">${this.btn("dblL", "折叠工具栏")}</div>
      <span class="grip"></span>
      <div class="toolgrid">${tools.map(([id, label, sub]) => html`<button
        class=${classMap({ on: this.tool === id, sub })} aria-label=${label} title=${label}
        @click=${() => (this.tool = id)}>${icon(id)}</button>`)}</div>
      <div class="proxy">
        <span class="stroke">${this.noneStroke(36)}</span>
        <button class="fill" aria-label="填色"></button>
        ${this.btn("swap", "互换填色和描边", "swap")}
        ${this.btn("defaults", "默认填色和描边", "defs")}
      </div>
      <div class="modes"><button class="on" aria-label="颜色"><i class="m-fill"></i></button><button aria-label="渐变"><i class="m-grad"></i></button><button aria-label="无"><i class="m-none"></i></button></div>
      <div class="modes">${this.btn("drawNormal", "正常绘图", "on")}${this.btn("drawBehind", "背面绘图")}${this.btn("drawInside", "内部绘图")}</div>
      <button class="screen" aria-label="更改屏幕模式">${icon("screens", 24, 18)}</button>
      ${this.btn("more", "编辑工具栏", "more")}
    </aside>`;
  }

  private object() {
    const xs = [5, 33, 61], ys = [8, 139, 269];
    return html`<svg class="object" width="72" height="280" viewBox="0 0 72 280" aria-label="矩形">
      <rect x="5" y="8" width="56" height="261" fill=${PURPLE} stroke="#5f7be4" stroke-width="1.500"/>
      ${ys.flatMap((y) => xs.map((x) => x === 33 && y === 139
        ? svg`<circle cx="33" cy="139" r="3.200" fill="#5f7be4"/>`
        : svg`<rect x=${x - 2.5} y=${y - 2.5} width="5" height="5" fill="#fff" stroke="#5f7be4"/>`))}
      ${[[19, 22], [47, 22], [19, 254], [47, 254]].map(([x, y]) => svg`<circle cx=${x} cy=${y} r="3" fill=${PURPLE} stroke="#5f7be4" stroke-width="2.500"/><circle cx=${x} cy=${y} r="3" fill="none" stroke="#e6ebff" stroke-width="1.200"/><circle cx=${x} cy=${y} r="1" fill="#5f7be4"/>`)}
      <path d="M42.500 97v18l4.500-4.500h8z" fill="#000" stroke="#9a7aa8" stroke-width=".8"/>
      <rect x="51.500" y="115" width="11" height="8" fill="none" stroke="#c6a6d0" stroke-width="2.200"/>
      <rect x="51.500" y="115" width="11" height="8" fill=${PURPLE} stroke="#000" stroke-width="1.500" stroke-dasharray="2.500 1"/>
      <circle cx="57" cy="119" r="1" fill="#000"/>
    </svg>`;
  }

  private kids() {
    return html`<section class="float kids">
      <div class="strip">${this.btn("dblL", "折叠")}${this.btn("close", "关闭")}</div>
      <div class="tabs"><button>中性</button><button class="on">儿童物品</button><button>纺织品</button><span class="grow"></span>${this.btn("burger", "面板菜单", "end")}</div>
      <label class="find">${icon("search")}<input aria-label="查找色板" /></label>
      <div class="list">${kidsGroups.map((g) => this.group(g))}</div>
      <div class="tools">${this.btn("books", "色板库菜单")}${this.btn("prev", "上一个色板库")}${this.btn("next", "下一个色板库")}<span class="grow"></span>${this.btn("noBrush", "不可编辑")}<span></span></div>
      <div class="foot"><span class="grip"></span></div>
    </section>`;
  }

  private offPick(label: string) {
    return html`<div class="pick off"><select disabled aria-label=${label}></select>${icon("chev")}</div>`;
  }

  private gradient() {
    return html`<section class="float gpanel">
      <div class="topline"></div>
      <div class="tabs"><button class="on lead">${icon("fold")}渐变</button><button>透明度</button><span class="grow"></span>${this.btn("dblRopen", "折叠", "end")}<span class="bar"></span>${this.btn("burger", "面板菜单", "end")}</div>
      <div class="gbody">
        <div class="gleft">
          <div class="gcur"><i></i><b></b></div>
          <div class="duo">${this.noneStroke(20)}<b></b></div>
          <button class="dim" aria-label="反向渐变">${icon("reverse")}</button>
        </div>
        <div class="gform">
          <span class="lab">类型：</span>
          <div class="seg"><button aria-label="线性"><i class="t1"></i></button><button aria-label="径向"><i class="t2"></i></button><button aria-label="任意形状"><i class="t3"></i></button></div>
          <span class="lab off">描边：</span>
          <div class="seg sm dim">${this.btn("strokeIn", "在描边中应用渐变")}${this.btn("strokeAlong", "沿描边应用渐变")}${this.btn("strokeAcross", "跨描边应用渐变")}</div>
          <span class="lab ic">${icon("angle")}</span>${this.offPick("角度")}
          <span class="lab ic">${icon("aspect")}</span>${this.offPick("长宽比")}
        </div>
      </div>
      <div class="ramp dim"><i></i>${this.btn("trash", "删除色标")}</div>
      <div class="gbody low">
        <div class="gleft dim">${icon("dropper")}</div>
        <div class="gform low">
          <span class="lab off">不透明度：</span>${this.offPick("不透明度")}
          <span class="lab off">位置：</span>${this.offPick("位置")}
        </div>
      </div>
      <div class="foot"><span class="grip"></span></div>
    </section>`;
  }

  private workspace() {
    return html`<main class="workspace">
      <div class="doctabs"><div class="doctab"><span>未标题-1* @ 88% (CMYK/GPU 预览)</span><button class="bright" aria-label="关闭文档">${icon("close")}</button></div></div>
      <div class="stage">
        <div class="canvas">
          <div class="art"><div class="tan"></div><div class="frame"></div></div>
          ${this.object()}
        </div>
        <div class="vscroll">${icon("chevUp")}<i></i>${icon("chev")}</div>
      </div>
      <div class="status">
        <div class="pick mono"><select aria-label="缩放级别"><option>88%</option></select>${icon("chev")}</div>
        ${this.btn("first", "首个画板", "nav")}${this.btn("prevS", "上一个画板", "nav")}
        <div class="pick small mono"><select aria-label="画板导航"><option>1</option></select>${icon("chev")}</div>
        ${this.btn("nextS", "下一个画板", "nav")}${this.btn("last", "最后一个画板", "nav")}
        <span class="mode">选择</span>
        <button class="bright" aria-label="状态栏菜单">${icon("nextS")}</button>
        <div class="hscroll">${icon("chevL")}<span class="a"></span><i></i><span class="b"></span>${icon("chevR")}</div>
        <span class="endcap"></span>
      </div>
      ${this.kids()}${this.gradient()}
    </main>`;
  }

  private dock() {
    const groups = [
      [["helm", "导航器"], ["info", "信息"]],
      [["appearance", "外观"], ["styles", "图形样式"]],
      [["gradient", "渐变"], ["transparency", "透明度"]],
      [["tframe", "变换"], ["align", "对齐"], ["pathfinder", "路径查找器"]],
      [["exportIcon", "资源导出"]],
    ];
    return html`<aside class="dock">
      <div class="strip">${this.btn("dblL", "展开面板")}</div>
      ${groups.map((g, i) => html`<div class=${classMap({ dockgroup: true, last: i === 4 })}><span class="grip"></span>
        ${g.map(([n, l]) => this.btn(n, l, n === "gradient" ? "on" : ""))}</div>`)}
    </aside>`;
  }

  private tabs(names: string[], lead = false) {
    return html`<div class="tabs">${names.map((n, i) => html`<button class=${classMap({ on: i === 0, lead: lead && i === 0 })}>${lead && i === 0 ? icon("fold") : nothing}${n}</button>`)}<span class="grow"></span>${this.btn("burger", "面板菜单", "end")}</div>`;
  }

  private side() {
    const ticks = [32, 65, 98, 131, 164];
    return html`<aside class="side">
      <div class="strip">${this.btn("dblR", "折叠为图标")}</div>
      <section class="panel">
        ${this.tabs(["颜色"], true)}
        <div class="trio"><button class="none-sw" aria-label="无"></button><button class="black-sw" aria-label="黑色"></button><button class="white-sw" aria-label="白色"></button></div>
        <div class="spectrum"></div>
      </section>
      <section class="panel">
        ${this.tabs(["色板", "库"])}
        <div class="swhead"><div class="duo">${this.noneStroke(20)}<b></b></div><div class="views">${this.btn("rows", "列表视图")}${this.btn("tiles", "缩览图视图", "on")}</div></div>
        <div class="list swlist"><div class="swgrid">${mainSwatches.map((c) => this.swatch(c))}</div>${swatchGroups.map((g) => this.group(g))}</div>
        <div class="tools">${this.btn("books", "色板库菜单")}${this.btn("kinds", "打开颜色主题面板")}${this.btn("cloud", "添加到库", "dim")}${this.btn("swatchKinds", "显示色板类型")}${this.btn("options", "色板选项", "dim")}${this.btn("folder", "新建颜色组")}${this.btn("fresh", "新建色板")}${this.btn("trash", "删除色板", "dim")}</div>
      </section>
      <section class="panel">
        ${this.tabs(["颜色参考"], true)}
        <div class="ref"><b></b>${this.btn("wheel", "编辑颜色")}${this.btn("addGroup", "存储颜色组")}</div>
      </section>
      <section class="panel">
        ${this.tabs(["画笔", "描边", "符号"])}
        <div class="list brushes">
          <div class="dots">${[1.5, 5, 1, 6].map((r) => html`<button aria-label="书法画笔"><svg width="32" height="32" viewBox="0 0 32 32"><ellipse cx="16" cy="16" rx=${r} ry=${r === 1 ? 0.7 : r}/></svg></button>`)}</div>
          <button class="brush line"><i></i>基本</button>
          <button class="brush" aria-label="图案画笔"><svg width="214" height="32" viewBox="0 0 214 32">
            <path d="M5 5h94v14H5zM5 5h15v26H5zM98 5h20v14H98zM104 1h14v18h-14z" fill="#9dacc8"/>
            <path d="M20 19h106v8H28v4h-8zM119 1h7v26h-7z" fill="#7f93ac"/>
            <path d="M20 31V19.500h98.500V1" fill="none" stroke="#d7deea"/>
            <path d="M32.500 5v22M65.500 5v22M98.500 5v22" stroke="#e8ecf3"/>
            ${ticks.map((x) => svg`<path d="M${x + 0.5} 0v3M${x + 0.5} 29v3" stroke="#000"/>`)}
          </svg></button>
          <button class="brush" aria-label="毛刷画笔"><svg width="32" height="32" viewBox="0 0 32 32"><path d="M9 11.500h12.500v9.500H9z" fill="#ddd" stroke="#111" stroke-width="1.300"/><path d="M12 11.500v9.500" stroke="#111" stroke-width="1.300"/></svg><span class="num">3.00</span>
            <svg width="120" height="32" viewBox="0 0 120 32"><path d="M0 15.500C28 5 42 11 56 16s30 10 56 0" fill="none" stroke="#6b6b6b" stroke-width="2"/></svg></button>
          <button class="brush" aria-label="炭笔画笔"><svg width="214" height="32" viewBox="0 0 214 32"><path d=${charcoal} stroke="#151515" stroke-width="1"/></svg></button>
        </div>
        <div class="tools">${this.btn("books", "画笔库菜单")}${this.btn("ccFolder", "库面板")}<span></span><span></span>${this.btn("noBrush", "移去画笔描边", "dim")}${this.btn("options", "所选对象的选项", "dim")}${this.btn("fresh", "新建画笔")}${this.btn("trash", "删除画笔", "dim")}</div>
      </section>
      <section class="panel fill-rest">
        ${this.tabs(["图层"])}
        <div class="list layers"><div class="layer">
          ${this.btn("eye", "切换可视性")}<span></span><span class="bar"></span>
          <button class="bright" aria-label="展开图层">${icon("chevR")}</button><span></span>
          <svg class="thumb" viewBox="0 0 16 16"><path d="M0 0h16v16H0z" fill="#fff"/><path d="M0 6h1v2H0z" fill="#67137f"/><path d="M9 8h6M9 6h3v3M13 6h2v3" stroke="#777" fill="none"/></svg>
          <span class="name">图层 1</span><i class="target"></i><i class="sel"></i>
        </div></div>
        <div class="tools"><span class="count">1...</span>${this.btn("collect", "收集以导出")}${this.btn("search", "定位对象")}${this.btn("clip", "建立剪切蒙版")}${this.btn("sublayer", "创建新子图层")}${this.btn("fresh", "创建新图层")}${this.btn("trash", "删除所选图层", "dim")}</div>
      </section>
    </aside>`;
  }

  render() {
    return html`${this.menubar()}${this.control()}
      <div class="main">${this.toolbar()}${this.workspace()}${this.dock()}${this.side()}</div>`;
  }
}
